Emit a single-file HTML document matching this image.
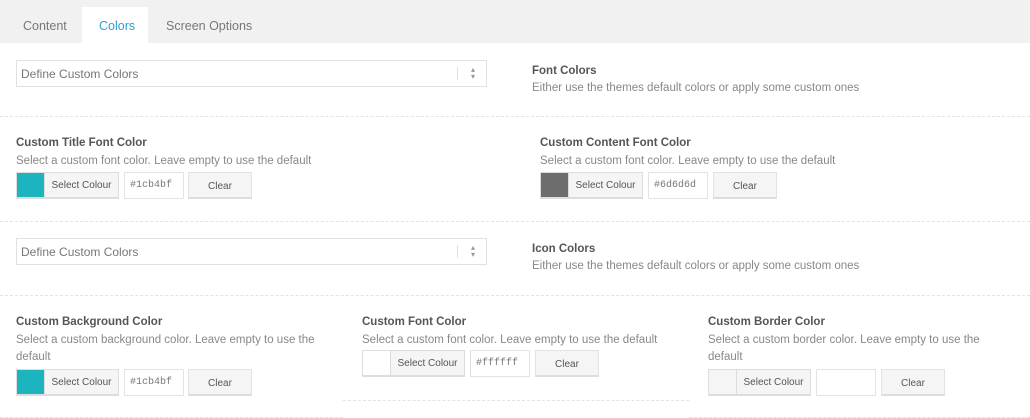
<!DOCTYPE html>
<html><head><meta charset="utf-8"><style>
*{box-sizing:border-box;margin:0;padding:0}
body{width:1030px;height:418px;background:#fff;position:relative;overflow:hidden;font-family:"Liberation Sans",sans-serif;color:#666}
.a{position:absolute;white-space:nowrap}
.hdr{position:absolute;left:0;top:0;width:1030px;height:43px;background:#f1f1f1}
.tab{position:absolute;top:19px;font-size:12.5px;color:#777}
.dash{position:absolute;height:0;border-top:1px dashed #e3e3e3}
.sel{position:absolute;width:471px;height:27px;border:1px solid #e1e1e1;font-size:12px;color:#777;padding:6px 4px}
.sel i{position:absolute;right:28px;top:6px;height:13px;border-left:1px solid #e1e1e1}
.sel b{position:absolute;right:11px;top:5px;font-size:8px;line-height:7px;color:#999;font-weight:normal}
h4{position:absolute;font-size:11.5px;font-weight:bold;color:#555;white-space:nowrap}
.d{position:absolute;font-size:11.5px;color:#888;line-height:17px}
.sw{position:absolute;width:29px;height:27px;border:1px solid #ddd;border-bottom:2px solid #ddd}
.sc{position:absolute;width:74px;height:27px;background:#f5f5f5;border:1px solid #ddd;border-left:none;border-bottom:2px solid #ddd;font-size:10px;color:#555;text-align:center;line-height:26px}
.hx{position:absolute;width:60px;height:27px;border:1px solid #e3e3e3;font-family:"Liberation Mono",monospace;font-size:10px;color:#777;padding-left:5px;line-height:26px}
.cl{position:absolute;width:64px;height:27px;background:#f5f5f5;border:1px solid #e3e3e3;border-bottom:2px solid #ddd;font-size:10px;color:#555;text-align:center;line-height:27px}
</style></head><body>
<div class="hdr"></div>
<div class="a" style="left:82px;top:7px;width:66px;height:37px;background:#fff"></div>
<div class="tab" style="left:23px">Content</div>
<div class="tab" style="left:99px;color:#2a9fd6">Colors</div>
<div class="tab" style="left:166px">Screen Options</div>

<div class="sel" style="left:16px;top:60px">Define Custom Colors<i></i><b>▴<br>▾</b></div>
<h4 style="left:532px;top:65px">Font Colors</h4>
<div class="d a" style="left:532px;top:80px">Either use the themes default colors or apply some custom ones</div>
<div class="dash" style="left:0;top:116px;width:1030px"></div>

<h4 style="left:16px;top:137px">Custom Title Font Color</h4>
<div class="d a" style="left:16px;top:153px">Select a custom font color. Leave empty to use the default</div>
<div class="sw" style="left:16px;top:172px;background:#1cb4bf"></div><div class="sc" style="left:45px;top:172px">Select Colour</div><div class="hx" style="left:124px;top:172px">#1cb4bf</div><div class="cl" style="left:188px;top:172px">Clear</div>

<h4 style="left:540px;top:137px">Custom Content Font Color</h4>
<div class="d a" style="left:540px;top:153px">Select a custom font color. Leave empty to use the default</div>
<div class="sw" style="left:540px;top:172px;background:#6d6d6d"></div><div class="sc" style="left:569px;top:172px">Select Colour</div><div class="hx" style="left:648px;top:172px">#6d6d6d</div><div class="cl" style="left:713px;top:172px">Clear</div>
<div class="dash" style="left:0;top:221px;width:1030px"></div>

<div class="sel" style="left:16px;top:238px">Define Custom Colors<i></i><b>▴<br>▾</b></div>
<h4 style="left:532px;top:243px">Icon Colors</h4>
<div class="d a" style="left:532px;top:258px">Either use the themes default colors or apply some custom ones</div>
<div class="dash" style="left:0;top:295px;width:1030px"></div>

<h4 style="left:16px;top:316px">Custom Background Color</h4>
<div class="d" style="left:16px;top:332px;width:320px">Select a custom background color. Leave empty to use the default</div>
<div class="sw" style="left:16px;top:369px;background:#1cb4bf"></div><div class="sc" style="left:45px;top:369px">Select Colour</div><div class="hx" style="left:124px;top:369px">#1cb4bf</div><div class="cl" style="left:188px;top:369px">Clear</div>

<h4 style="left:362px;top:316px">Custom Font Color</h4>
<div class="d a" style="left:362px;top:332px">Select a custom font color. Leave empty to use the default</div>
<div class="sw" style="left:362px;top:350px;background:#fff"></div><div class="sc" style="left:391px;top:350px">Select Colour</div><div class="hx" style="left:470px;top:350px">#ffffff</div><div class="cl" style="left:535px;top:350px">Clear</div>

<h4 style="left:708px;top:316px">Custom Border Color</h4>
<div class="d" style="left:708px;top:332px;width:300px">Select a custom border color. Leave empty to use the default</div>
<div class="sw" style="left:708px;top:369px;background:#f5f5f5"></div><div class="sc" style="left:737px;top:369px">Select Colour</div><div class="hx" style="left:816px;top:369px"></div><div class="cl" style="left:881px;top:369px">Clear</div>

<div class="dash" style="left:0;top:417px;width:343px"></div>
<div class="dash" style="left:343px;top:400px;width:346px"></div>
<div class="dash" style="left:689px;top:417px;width:341px"></div>
</body></html>
